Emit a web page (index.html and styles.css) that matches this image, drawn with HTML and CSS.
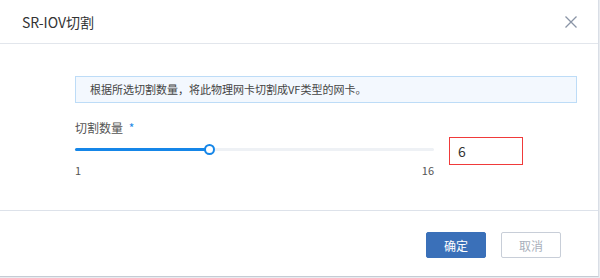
FILE: index.html
```html
<!DOCTYPE html>
<html>
<head>
    <title>SR-IOV切割</title>
    <link rel="stylesheet" href="styles.css">
</head>
<body>
    <div class="dialog">
        <div class="dialog-header">
            <span class="dialog-title">SR-IOV切割</span>
            <svg class="close" width="12" height="12" viewBox="0 0 12 12">
                <path d="M0.5 0.5 L11.5 11.5 M11.5 0.5 L0.5 11.5" stroke="#8a94a6" stroke-width="1.3" fill="none"/>
            </svg>
        </div>
        <div class="dialog-body">
            <div class="notice">根据所选切割数量，将此物理网卡切割成VF类型的网卡。</div>
            <div class="field">
                <div class="field-main">
                    <div class="label">切割数量 <span class="required">*</span></div>
                    <div class="slider">
                        <div class="slider-fill" style="width: 134px"></div>
                        <div class="slider-thumb" style="left: 134px"></div>
                    </div>
                    <div class="slider-marks">
                        <span>1</span>
                        <span>16</span>
                    </div>
                </div>
                <div class="count-input">6</div>
            </div>
        </div>
        <div class="dialog-footer">
            <button class="btn btn-primary">确定</button>
            <button class="btn btn-default">取消</button>
        </div>
    </div>
</body>
</html>
```

FILE: styles.css
```css
body {
    margin: 0;
    background: #e9ecf0;
    font-family: "Noto Sans CJK SC", "Noto Sans", sans-serif;
    color: #333;
}
.dialog {
    width: 598px;
    height: 276px;
    background: #fff;
    border-right: 1px solid #d9dee6;
    border-bottom: 1px solid #c5cbd4;
    display: flex;
    flex-direction: column;
}
.dialog-header {
    height: 43px;
    border-bottom: 1px solid #e2e6ec;
    display: flex;
    align-items: center;
    justify-content: space-between;
    padding: 0 21px 0 22px;
}
.dialog-title {
    font-size: 14px;
    color: #333;
}
.close {
    display: block;
}
.dialog-body {
    flex: 1;
    padding: 32px 0 0 75px;
}
.notice {
    width: 486px;
    height: 25px;
    line-height: 25px;
    padding-left: 14px;
    font-size: 11px;
    color: #444;
    background: #f3f8fe;
    border: 1px solid #bddcf7;
}
.field {
    display: flex;
    align-items: flex-start;
    margin-top: 15px;
}
.field-main {
    width: 359px;
}
.label {
    font-size: 12px;
    color: #555;
    height: 20px;
    line-height: 20px;
}
.required {
    color: #1e8ae6;
    margin-left: 3px;
}
.slider {
    position: relative;
    height: 3px;
    background: #eef1f5;
    margin-top: 10px;
    border-radius: 2px;
}
.slider-fill {
    height: 3px;
    background: #1586e8;
    border-radius: 2px;
}
.slider-thumb {
    position: absolute;
    top: -4px;
    width: 7px;
    height: 7px;
    margin-left: -5px;
    border: 2px solid #1586e8;
    border-radius: 50%;
    background: #fff;
}
.slider-marks {
    display: flex;
    justify-content: space-between;
    font-size: 11px;
    color: #555;
    margin-top: 11px;
}
.count-input {
    width: 64px;
    height: 26px;
    line-height: 26px;
    margin: 19px 0 0 15px;
    padding-left: 8px;
    border: 1px solid #f03a3a;
    font-size: 14px;
    color: #333;
}
.dialog-footer {
    height: 66px;
    border-top: 1px solid #dde2ea;
    display: flex;
    justify-content: flex-end;
    align-items: flex-start;
    gap: 15px;
    padding: 21px 37px 0 0;
    box-sizing: border-box;
}
.btn {
    width: 60px;
    height: 26px;
    font-family: inherit;
    font-size: 12px;
    border-radius: 2px;
    cursor: pointer;
}
.btn-primary {
    background: #3a70b9;
    border: 1px solid #3a70b9;
    color: #fff;
}
.btn-default {
    background: #fff;
    border: 1px solid #c8ced8;
    color: #a9b0bb;
}
```
